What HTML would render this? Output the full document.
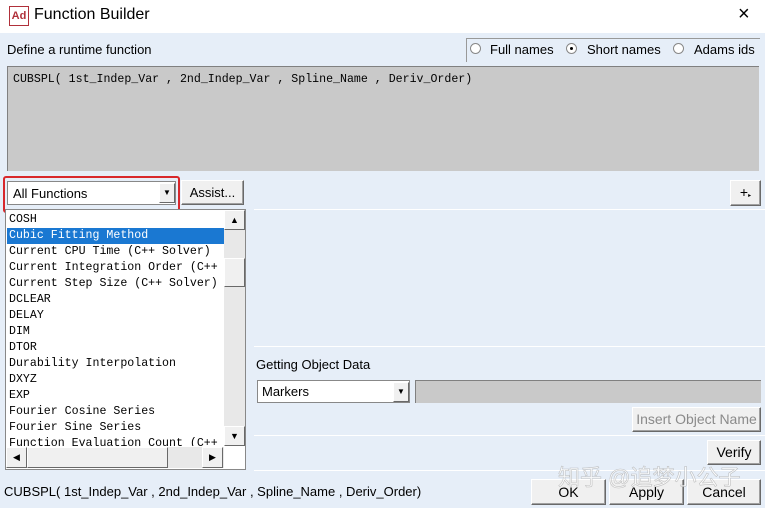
<!DOCTYPE html>
<html><head><style>
*{box-sizing:border-box;margin:0;padding:0}
body{width:765px;height:508px;position:relative;overflow:hidden;background:#e6eef8;font-family:"Liberation Sans",sans-serif;font-size:13px;color:#000}
.a{position:absolute}
.btn{position:absolute;background:#f0f0f0;border:1px solid;border-color:#fff #696969 #696969 #fff;box-shadow:inset -1px -1px 0 #a0a0a0;text-align:center;font-size:14px}
.mono{font-family:"Liberation Mono",monospace;font-size:11.6px}
.hl{position:absolute;height:1px;background:#a0a0a0;border-bottom:1px solid #fff}
.rad{position:absolute;width:11px;height:11px;border-radius:50%;background:#fff;border:1px solid #888}
.sb{position:absolute;background:#f0f0f0;border:1px solid;border-color:#fff #696969 #696969 #fff}
</style></head><body>
<div class="a" style="left:0;top:0;width:765px;height:33px;background:#fff"></div>
<div class="a" style="left:9px;top:6px;width:20px;height:20px;border:1px solid #b0303a;color:#b0303a;font-weight:bold;font-size:11px;line-height:18px;text-align:center">Ad</div>
<div class="a" style="left:34px;top:6px;font-size:16px">Function Builder</div>
<div class="a" style="left:738px;top:3px;font-size:20px;font-weight:300">×</div>

<div class="a" style="left:7px;top:42px;font-size:13px">Define a runtime function</div>
<div class="a" style="left:466px;top:38px;width:294px;height:24px;border-left:1px solid #999;border-top:1px solid #999"></div>
<div class="rad" style="left:470px;top:43px;"></div>
<div class="a" style="left:490px;top:42px">Full names</div>
<div class="rad" style="left:566px;top:43px"></div><div class="a" style="left:570px;top:47px;width:3px;height:3px;background:#000;border-radius:50%"></div>
<div class="a" style="left:587px;top:42px">Short names</div>
<div class="rad" style="left:673px;top:43px"></div>
<div class="a" style="left:694px;top:42px">Adams ids</div>

<div class="a" style="left:7px;top:66px;width:752px;height:105px;background:#c9c9c9;border-top:1px solid #808080;border-left:1px solid #808080"></div>
<div class="a mono" style="left:13px;top:73px">CUBSPL( 1st_Indep_Var , 2nd_Indep_Var , Spline_Name , Deriv_Order)</div>

<div class="a" style="left:7px;top:181px;width:169px;height:24px;background:#fff;border:1px solid #888"></div>
<div class="a" style="left:13px;top:186px">All Functions</div>
<div class="sb" style="left:159px;top:183px;width:16px;height:20px;font-size:8px;text-align:center;line-height:18px">▼</div>
<div class="a" style="left:3px;top:176px;width:177px;height:37px;border:2px solid #d8282c;border-radius:3px"></div>
<div class="btn" style="left:181px;top:180px;width:63px;height:25px;line-height:23px;font-size:13px">Assist...</div>
<div class="btn" style="left:730px;top:180px;width:31px;height:26px;line-height:23px">+<span style="font-size:6px">▸</span></div>

<div class="hl" style="left:254px;top:209px;width:511px"></div>
<div class="hl" style="left:254px;top:346px;width:511px"></div>

<div class="a" style="left:5px;top:209px;width:241px;height:261px;background:#fff;border:1px solid #888"></div>
<div class="a" style="left:7px;top:228px;width:217px;height:16px;background:#1a78d2"></div>
<div class="a mono" style="left:9px;top:212px;line-height:16px;white-space:pre;width:215px;overflow:hidden;height:234px">COSH
<span style="color:#fff">Cubic Fitting Method</span>
Current CPU Time (C++ Solver)
Current Integration Order (C++
Current Step Size (C++ Solver)
DCLEAR
DELAY
DIM
DTOR
Durability Interpolation
DXYZ
EXP
Fourier Cosine Series
Fourier Sine Series
Function Evaluation Count (C++</div>
<div class="a" style="left:224px;top:210px;width:21px;height:236px;background:#e8e8e8"></div>
<div class="sb" style="left:224px;top:210px;width:21px;height:20px;font-size:9px;text-align:center;line-height:18px">▲</div>
<div class="sb" style="left:224px;top:258px;width:21px;height:29px"></div>
<div class="sb" style="left:224px;top:426px;width:21px;height:20px;font-size:9px;text-align:center;line-height:18px">▼</div>
<div class="a" style="left:6px;top:447px;width:218px;height:21px;background:#e8e8e8"></div>
<div class="sb" style="left:6px;top:447px;width:21px;height:21px;font-size:9px;text-align:center;line-height:19px">◀</div>
<div class="sb" style="left:27px;top:447px;width:141px;height:21px"></div>
<div class="sb" style="left:202px;top:447px;width:21px;height:21px;font-size:9px;text-align:center;line-height:19px">▶</div>

<div class="a" style="left:256px;top:357px;font-size:13px">Getting Object Data</div>
<div class="a" style="left:257px;top:380px;width:153px;height:23px;background:#fff;border:1px solid #888"></div>
<div class="a" style="left:262px;top:384px">Markers</div>
<div class="sb" style="left:393px;top:382px;width:16px;height:20px;font-size:8px;text-align:center;line-height:18px">▼</div>
<div class="a" style="left:415px;top:380px;width:346px;height:23px;background:#c9c9c9;border-top:1px solid #808080;border-left:1px solid #808080"></div>
<div class="btn" style="left:632px;top:407px;width:129px;height:25px;line-height:23px;color:#8a8a8a">Insert Object Name</div>
<div class="hl" style="left:254px;top:435px;width:511px"></div>
<div class="btn" style="left:707px;top:440px;width:54px;height:25px;line-height:23px">Verify</div>
<div class="hl" style="left:254px;top:470px;width:511px"></div>

<div class="a" style="left:4px;top:484px;font-size:13px">CUBSPL( 1st_Indep_Var , 2nd_Indep_Var , Spline_Name , Deriv_Order)</div>
<div class="btn" style="left:531px;top:479px;width:75px;height:26px;line-height:24px">OK</div>
<div class="btn" style="left:609px;top:479px;width:75px;height:26px;line-height:24px">Apply</div>
<div class="btn" style="left:687px;top:479px;width:74px;height:26px;line-height:24px">Cancel</div>
<div class="a" style="left:558px;top:460px;font-family:'Liberation Sans','Noto Sans CJK SC',sans-serif;font-size:22px;color:rgba(255,255,255,0.75);-webkit-text-stroke:0.6px rgba(140,140,140,0.5);white-space:nowrap">知乎 @追梦小公子</div>
</body></html>
